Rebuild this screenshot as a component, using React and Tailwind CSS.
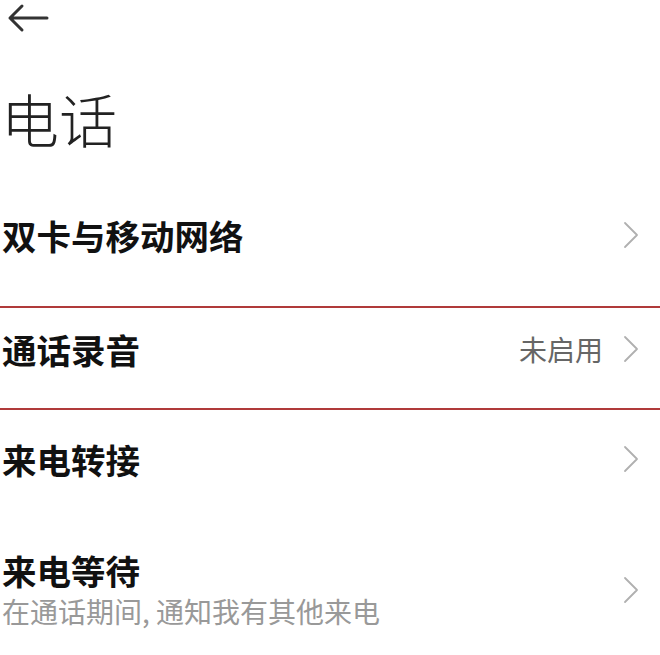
export default function App() {
  const cjk = { fontFamily: '"Noto Sans CJK SC", "Noto Sans", sans-serif' };

  const Chevron = () => (
    <svg width="16" height="28" viewBox="0 0 16 28" fill="none" className="shrink-0">
      <polyline points="2,2 14,14 2,26" stroke="#b0b0b0" strokeWidth="1.8" strokeLinecap="round" strokeLinejoin="round" />
    </svg>
  );

  return (
    <div className="w-[660px] h-[655px] bg-white overflow-hidden text-[#111]" style={cjk}>
      {/* 顶栏 */}
      <div className="h-[36px] flex items-center pl-[7px]">
        <svg width="42" height="30" viewBox="0 0 42 30" fill="none">
          <path d="M3 15 H40 M15 3 L3 15 L15 27" stroke="#333" strokeWidth="3" strokeLinecap="round" strokeLinejoin="round" />
        </svg>
      </div>

      <h1 className="mt-[46px] h-[72px] flex items-center text-[58px] font-light leading-none text-[#222] pl-[1px]">
        电话
      </h1>

      {/* 双卡与移动网络 */}
      <div className="mt-[35px] h-[92px] flex items-center justify-between pl-[2px] pr-[21px]">
        <span className="text-[34.5px] font-semibold leading-none">双卡与移动网络</span>
        <Chevron />
      </div>

      {/* 通话录音 */}
      <div className="mt-[25px] border-y-2 border-[#b03a3a] h-[104px] flex items-center justify-between pl-[2px] pr-[21px] pb-[18px]">
        <span className="text-[34.5px] font-semibold leading-none">通话录音</span>
        <div className="flex items-center gap-[20px]">
          <span className="text-[28px] text-[#666] leading-none">未启用</span>
          <Chevron />
        </div>
      </div>

      {/* 来电转接 */}
      <div className="h-[102px] flex items-center justify-between pl-[2px] pr-[21px] pb-[4px]">
        <span className="text-[34.5px] font-semibold leading-none">来电转接</span>
        <Chevron />
      </div>

      {/* 来电等待 */}
      <div className="pt-[38px] flex items-center justify-between pl-[2px] pr-[21px]">
        <div className="flex flex-col">
          <span className="text-[34.5px] font-semibold leading-[40px]">来电等待</span>
          <span className="mt-[2px] text-[28px] text-[#999] leading-[38px]">在通话期间, 通知我有其他来电</span>
        </div>
        <Chevron />
      </div>
    </div>
  );
}
